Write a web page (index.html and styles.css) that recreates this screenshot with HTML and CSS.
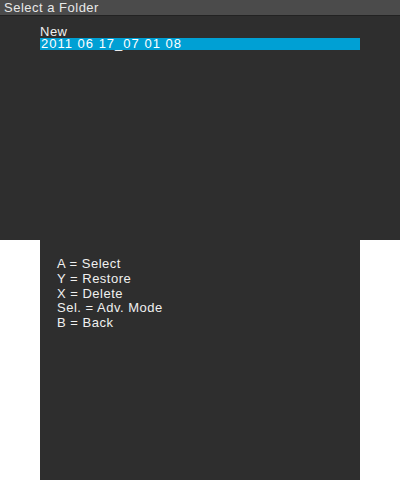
FILE: index.html
```html
<!DOCTYPE html>
<html>
<head>
<meta charset="utf-8">
<link rel="stylesheet" href="styles.css">
</head>
<body>
<div class="top">
  <div class="titlebar">Select a Folder</div>
  <ul class="list">
    <li class="item">New</li>
    <li class="item selected">2011 06 17_07 01 08</li>
  </ul>
</div>
<div class="bottom-wrap">
  <div class="bottom">
    <div class="help">A = Select</div>
    <div class="help">Y = Restore</div>
    <div class="help">X = Delete</div>
    <div class="help">Sel. = Adv. Mode</div>
    <div class="help">B = Back</div>
  </div>
</div>
</body>
</html>
```
FILE: styles.css
```css
html, body {
  margin: 0;
  padding: 0;
  background: #ffffff;
}
body {
  width: 400px;
  height: 480px;
  overflow: hidden;
  font-family: "Liberation Sans", Arial, sans-serif;
  font-size: 13px;
  letter-spacing: 0.5px;
  color: #f0f0f0;
}
.top {
  width: 400px;
  height: 240px;
  background: #2e2e2e;
}
.titlebar {
  height: 15px;
  line-height: 15px;
  padding-left: 4px;
  background: #4b4b4b;
  border-bottom: 1px solid #222222;
  color: #e8e8e8;
}
.list {
  list-style: none;
  margin: 0;
  padding: 10px 40px 0 40px;
}
.item {
  height: 12px;
  line-height: 12px;
  white-space: nowrap;
}
.selected {
  background: #00a0d4;
  color: #ffffff;
  letter-spacing: 1px;
  padding-left: 1px;
}
.bottom-wrap {
  height: 240px;
  display: flex;
  justify-content: center;
}
.bottom {
  width: 320px;
  height: 240px;
  background: #2e2e2e;
  box-sizing: border-box;
  padding: 17px 0 0 17px;
}
.help {
  height: 14.75px;
  line-height: 14.75px;
  white-space: nowrap;
}
```
